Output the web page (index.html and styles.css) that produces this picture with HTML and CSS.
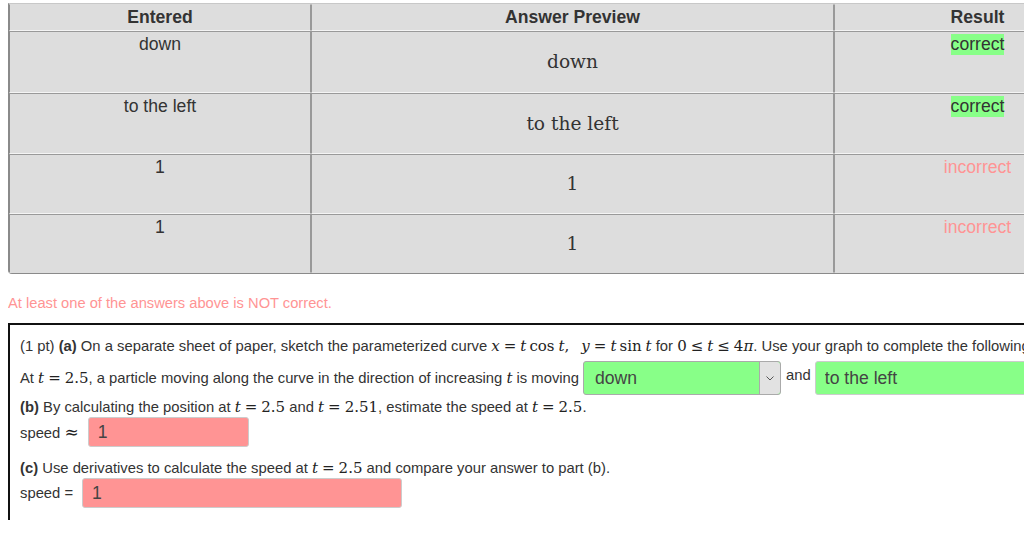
FILE: index.html
```
<!DOCTYPE html>
<html>
<head>
<meta charset="utf-8">
<link rel="stylesheet" href="styles.css">
</head>
<body>
<table class="results">
  <colgroup><col class="c1"><col class="c2"><col class="c3"></colgroup>
  <tr class="head"><th>Entered</th><th>Answer Preview</th><th>Result</th></tr>
  <tr class="r1"><td class="ent">down</td><td class="prev">down</td><td class="res"><span class="ok">correct</span></td></tr>
  <tr class="r2"><td class="ent">to the left</td><td class="prev">to the left</td><td class="res"><span class="ok">correct</span></td></tr>
  <tr class="r3"><td class="ent">1</td><td class="prev">1</td><td class="res"><span class="bad">incorrect</span></td></tr>
  <tr class="r4"><td class="ent">1</td><td class="prev">1</td><td class="res"><span class="bad">incorrect</span></td></tr>
</table>
<div class="msg">At least one of the answers above is NOT correct.</div>
<div class="problem">
  <div class="line l1">(1 pt)&nbsp;<b>(a)</b>&nbsp;On a separate sheet of paper, sketch the parameterized curve&nbsp;<span class="m"><i>x</i><span class="rel">=</span><i>t</i><span class="fn">cos</span><i>t</i>,<span class="sp"></span><i>y</i><span class="rel">=</span><i>t</i><span class="fn">sin</span><i>t</i></span>&nbsp;for&nbsp;<span class="m">0<span class="rel">≤</span><i>t</i><span class="rel">≤</span>4<i>π</i></span>. Use your graph to complete the following</div>
  <div class="line l2"><span>At&nbsp;<span class="m"><i>t</i><span class="rel">=</span>2.5</span>, a particle moving along the curve in the direction of increasing&nbsp;<span class="m"><i>t</i></span>&nbsp;is moving</span><span class="select"><span class="sel-text">down</span><span class="caret"><svg width="8" height="5" viewBox="0 0 8 5"><path d="M0.5 0.5 L4 4 L7.5 0.5" fill="none" stroke="#555" stroke-width="1"/></svg></span></span><span class="and">and</span><input class="field green wide" value="to the left" readonly></div>
  <div class="line l3"><b>(b)</b>&nbsp;By calculating the position at&nbsp;<span class="m"><i>t</i><span class="rel">=</span>2.5</span>&nbsp;and&nbsp;<span class="m"><i>t</i><span class="rel">=</span>2.51</span>, estimate the speed at&nbsp;<span class="m"><i>t</i><span class="rel">=</span>2.5</span>.</div>
  <div class="line l4"><span>speed&nbsp;<span class="m approx">≈</span></span><input class="field red short" value="1" readonly></div>
  <div class="line l5"><b>(c)</b>&nbsp;Use derivatives to calculate the speed at&nbsp;<span class="m"><i>t</i><span class="rel">=</span>2.5</span>&nbsp;and compare your answer to part (b).</div>
  <div class="line l6"><span>speed =</span><input class="field red long" value="1" readonly></div>
</div>
</body>
</html>
```
FILE: styles.css
```
html, body {
  overflow: hidden;
}
body {
  margin: 3px 0 0 8px;
  background: #fff;
  font-family: "Liberation Sans", Arial, sans-serif;
  color: #333;
}
.results {
  table-layout: fixed;
  width: 1114px;
  border-collapse: separate;
  border-spacing: 0;
  border: 1px solid #c8c8c8;
  border-left-color: #8a8a8a;
  border-bottom-color: #8a8a8a;
  border-radius: 0 0 0 4px;
  background: #fff;
  font-size: 17.6px;
}
.c1 { width: 302px; }
.c2 { width: 523px; }
.c3 { width: 287px; }
.results th, .results td {
  background: #ddd;
  border-top: 1px solid #999;
  border-left: 1px solid #999;
  border-right: 1px solid #999;
  border-bottom: 1px solid #f4f4f4;
  padding: 2px 5px;
  text-align: center;
  vertical-align: top;
  line-height: 20px;
  overflow: hidden;
  white-space: nowrap;
}
.results th {
  font-weight: bold;
  border-top-color: #ddd;
  vertical-align: middle;
  padding: 0 5px 2px;
}
.results td:first-child, .results th:first-child { border-left-color: #8a8a8a; }
.head { height: 27px; }
.r1 { height: 62px; }
.r2 { height: 61px; }
.r3 { height: 60px; }
.r4 { height: 59px; }
.results tr:last-child td { border-bottom-color: #ddd; }
.results td.prev {
  vertical-align: middle;
  font-family: "DejaVu Serif", serif;
  font-size: 18.6px;
}
.ok {
  background: #88ff88;
  display: inline-block;
  line-height: 20px;
  padding-bottom: 1px;
}
.bad {
  color: #ff9494;
}
.msg {
  margin-top: 19px;
  font-size: 14.7px;
  color: #ff9494;
  line-height: 20px;
}
.problem {
  margin-top: 10px;
  width: 1110px;
  border: 2px solid #111;
  border-right: none;
  border-bottom: none;
  padding: 11px 0 12px 10px;
  font-size: 14.8px;
  color: #333;
  white-space: nowrap;
}
.line {
  display: flex;
  align-items: center;
  min-height: 20px;
}
.l2 { margin-top: 5px; }
.l3 { margin-top: 2px; }
.l5 { margin-top: 11px; }
.m {
  font-family: "DejaVu Serif", serif;
  font-size: 15px;
  color: #222;
}
.m i { font-style: italic; }
.rel { margin: 0 4px; }
.fn { margin: 0 4px 0 3px; }
.sp { display: inline-block; width: 12px; }
.approx { font-size: 17px; }
.select {
  margin-left: 4px;
  width: 198px;
  height: 34px;
  box-sizing: border-box;
  border: 1px solid #aaa;
  border-radius: 3px;
  background: #88ff88;
  display: flex;
  align-items: center;
  font-size: 17.6px;
  color: #444;
}
.sel-text { flex: 1; padding-left: 11px; }
.caret {
  width: 20px;
  height: 32px;
  background: #e2e2e2;
  border-left: 1px solid #aaa;
  border-radius: 0 3px 3px 0;
  display: flex;
  align-items: center;
  justify-content: center;
}
.and { margin: -6px 4px 0 5px; }
.field {
  box-sizing: border-box;
  border: 1px solid #ccc;
  border-radius: 3px;
  font-family: "Liberation Sans", Arial, sans-serif;
  font-size: 17.6px;
  color: #444;
  padding: 0 9px;
  margin: 0;
  outline: none;
}
.green { background: #88ff88; }
.red { background: #ff9494; }
.wide { width: 300px; height: 34px; }
.short { width: 161px; height: 30px; margin-left: 9px; }
.long { width: 320px; height: 30px; margin-left: 9px; }
```
